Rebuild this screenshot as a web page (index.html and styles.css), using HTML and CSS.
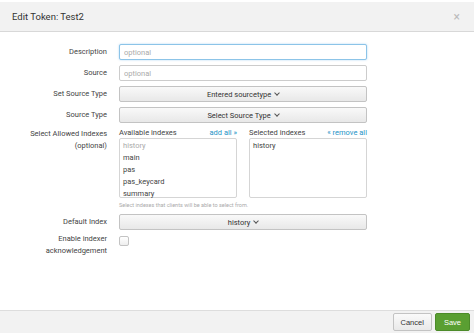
FILE: index.html
```html
<!DOCTYPE html>
<html lang="en">
<head>
    <meta charset="UTF-8">
    <meta name="viewport" content="width=device-width, initial-scale=1.0">
    <title>Edit Token: Test2</title>
    <link rel="stylesheet" href="styles.css">
</head>
<body>
    <div class="modal">
        <div class="modal-header">
            <h3>Edit Token: Test2</h3>
            <span class="close">&times;</span>
        </div>

        <div class="modal-body">
            <div class="row">
                <label class="label">Description</label>
                <div class="control">
                    <input class="text-input focused" type="text" placeholder="optional">
                </div>
            </div>
            <div class="row">
                <label class="label">Source</label>
                <div class="control">
                    <input class="text-input" type="text" placeholder="optional">
                </div>
            </div>
            <div class="row">
                <label class="label">Set Source Type</label>
                <div class="control">
                    <button class="dropdown">Entered sourcetype <span class="caret"></span></button>
                </div>
            </div>
            <div class="row">
                <label class="label">Source Type</label>
                <div class="control">
                    <button class="dropdown">Select Source Type <span class="caret"></span></button>
                </div>
            </div>
            <div class="row row-top">
                <label class="label">Select Allowed Indexes<br>(optional)</label>
                <div class="control">
                    <div class="accumulator">
                        <div class="list-col">
                            <div class="list-head">
                                <span>Available indexes</span>
                                <a href="#">add all &raquo;</a>
                            </div>
                            <ul class="list-box">
                                <li class="disabled">history</li>
                                <li>main</li>
                                <li>pas</li>
                                <li>pas_keycard</li>
                                <li>summary</li>
                            </ul>
                        </div>
                        <div class="list-col">
                            <div class="list-head">
                                <span>Selected indexes</span>
                                <a href="#">&laquo; remove all</a>
                            </div>
                            <ul class="list-box">
                                <li>history</li>
                            </ul>
                        </div>
                    </div>
                    <div class="help">Select indexes that clients will be able to select from.</div>
                </div>
            </div>
            <div class="row">
                <label class="label">Default Index</label>
                <div class="control">
                    <button class="dropdown">history <span class="caret"></span></button>
                </div>
            </div>
            <div class="row row-top">
                <label class="label label-ack">Enable indexer<br>acknowledgement</label>
                <div class="control">
                    <span class="checkbox"></span>
                </div>
            </div>
        </div>

        <div class="modal-footer">
            <button class="btn">Cancel</button>
            <button class="btn btn-primary">Save</button>
        </div>
    </div>
</body>
</html>
```

FILE: styles.css
```css
body {
    margin: 0;
    font-family: Roboto, 'Liberation Sans', sans-serif;
    font-size: 7.5px;
    color: #444;
    background: #fff;
}
.modal {
    width: 474px;
    height: 335px;
    display: flex;
    flex-direction: column;
    padding-top: 2px;
    box-sizing: border-box;
    background: #fff;
}
.modal-header {
    height: 29px;
    background: #f2f2f2;
    border-bottom: 1px solid #d8d8d8;
    display: flex;
    align-items: center;
    justify-content: space-between;
    padding: 0 14px 0 12px;
}
.modal-header h3 {
    margin: 0;
    font-size: 9.5px;
    font-weight: normal;
    color: #333;
}
.close {
    font-size: 12px;
    color: #bbb;
    line-height: 1;
}
.modal-body {
    flex: 1;
    padding-top: 12px;
}
.row {
    display: flex;
    align-items: center;
    margin-bottom: 5px;
}
.row-top {
    align-items: flex-start;
}
.label {
    width: 107px;
    text-align: right;
    padding-right: 12px;
    line-height: 12px;
}
.label-ack {
    margin-top: -2px;
}
.control {
    width: 248px;
}
.text-input {
    width: 100%;
    height: 16px;
    box-sizing: border-box;
    border: 1px solid #ccc;
    border-radius: 2px;
    padding: 0 4px;
    font-family: inherit;
    font-size: 7.5px;
    color: #333;
    background: #fff;
    outline: none;
}
.text-input::placeholder {
    color: #aaa;
}
.text-input.focused {
    border-color: #8cc4e8;
    box-shadow: 0 0 2px rgba(82, 168, 236, 0.5);
}
.dropdown {
    width: 100%;
    height: 16px;
    box-sizing: border-box;
    border: 1px solid #c3c3c3;
    border-radius: 2px;
    background: linear-gradient(#f9f9f9, #e8e8e8);
    font-family: inherit;
    font-size: 7.5px;
    color: #333;
    padding: 0;
}
.caret {
    display: inline-block;
    width: 3px;
    height: 3px;
    border-right: 1px solid #555;
    border-bottom: 1px solid #555;
    transform: rotate(45deg);
    margin: 0 0 2px 2px;
}
.accumulator {
    display: flex;
    gap: 12px;
}
.list-col {
    flex: 1;
}
.list-head {
    display: flex;
    justify-content: space-between;
    line-height: 10px;
}
.list-head a {
    color: #1e93c6;
    text-decoration: none;
}
.list-box {
    list-style: none;
    margin: 0;
    padding: 1px 3px;
    height: 60px;
    box-sizing: border-box;
    border: 1px solid #d5d5d5;
    border-radius: 2px;
}
.list-box li {
    line-height: 12px;
}
.list-box li.disabled {
    color: #aaa;
}
.help {
    font-size: 5.5px;
    color: #aaa;
    margin-top: 3px;
    line-height: 8px;
}
.checkbox {
    display: block;
    width: 8px;
    height: 8px;
    margin-top: 1px;
    border: 1px solid #c3c3c3;
    border-radius: 2px;
    background: linear-gradient(#fff, #eee);
}
.modal-footer {
    height: 22px;
    border-top: 1px solid #ddd;
    background: #f2f2f2;
    display: flex;
    justify-content: flex-end;
    align-items: center;
    gap: 3px;
    padding: 0 4px 0 0;
    margin-bottom: 2px;
}
.btn {
    height: 18px;
    padding: 0 7px;
    border: 1px solid #c3c3c3;
    border-radius: 2px;
    background: linear-gradient(#fafafa, #e9e9e9);
    font-family: 'Liberation Sans', sans-serif;
    font-size: 7.5px;
    color: #333;
}
.btn-primary {
    background: #5a9f32;
    border-color: #4c8b29;
    color: #fff;
    padding: 0 8px;
}
```
